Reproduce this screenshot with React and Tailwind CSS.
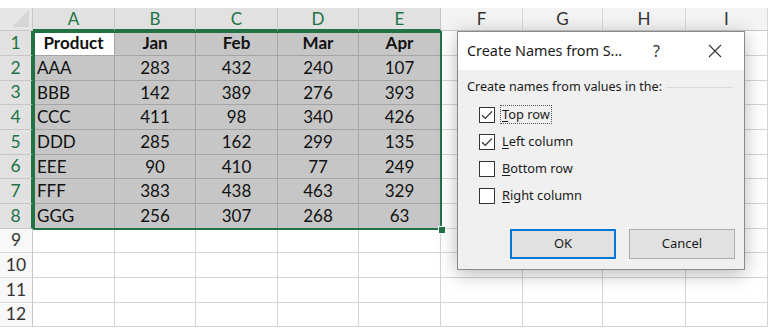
import React from 'react';

const cols = [
  { key: 'A', w: 'w-[82px]', sel: true },
  { key: 'B', w: 'w-[81px]', sel: true },
  { key: 'C', w: 'w-[82px]', sel: true },
  { key: 'D', w: 'w-[81px]', sel: true },
  { key: 'E', w: 'w-[82px]', sel: true },
  { key: 'F', w: 'w-[82px]', sel: false },
  { key: 'G', w: 'w-[80px]', sel: false },
  { key: 'H', w: 'w-[83px]', sel: false },
  { key: 'I', w: 'w-[82px]', sel: false },
];

const data = [
  ['Product', 'Jan', 'Feb', 'Mar', 'Apr'],
  ['AAA', '283', '432', '240', '107'],
  ['BBB', '142', '389', '276', '393'],
  ['CCC', '411', '98', '340', '426'],
  ['DDD', '285', '162', '299', '135'],
  ['EEE', '90', '410', '77', '249'],
  ['FFF', '383', '438', '463', '329'],
  ['GGG', '256', '307', '268', '63'],
];

const rowHeights = ['h-[25px]', 'h-[25px]', 'h-[24px]'];

const Cell = ({ col, row, c }) => {
  const value = data[row]?.[c];
  const inSel = col.sel && row < 8;
  const header = row === 0;
  const active = row === 0 && c === 0;
  let bg = 'bg-white';
  if (inSel && !active) bg = 'bg-[#c6c6c6]';
  const border = inSel ? 'border-[#a5a5a5]' : 'border-[#d4d4d4]';
  let align = 'justify-center';
  if (c === 0 && !header) align = 'justify-start pl-[4px]';
  return (
    <div className={`${col.w} h-full shrink-0 box-border border-r border-b ${border} ${bg} flex items-center ${align} ${header ? 'font-bold' : ''}`}>
      {value}
    </div>
  );
};

const Check = ({ checked, u, rest, focus }) => (
  <div className="flex items-center gap-[6px] h-[27px]">
    <div className="w-[16px] h-[16px] box-border border border-[#333] bg-white flex items-center justify-center">
      {checked && (
        <svg width="12" height="10" viewBox="0 0 12 10" fill="none">
          <path d="M1 5.2 L4.3 8.4 L11 1.4" stroke="#333" strokeWidth="1.3" />
        </svg>
      )}
    </div>
    <span className={`px-[1px] leading-[17px] ${focus ? 'outline outline-1 outline-dotted outline-[#555]' : ''}`}>
      <span className="underline underline-offset-[2px]">{u}</span>
      {rest}
    </span>
  </div>
);

export default function App() {
  return (
    <div className="relative w-[768px] h-[330px] overflow-hidden bg-white text-[#111] font-['Lato',sans-serif] text-[17px]">
      <div className="h-[8px]" />
      {/* column headers */}
      <div className="flex h-[23px]">
        <div className="relative w-[33px] shrink-0 box-border border-r border-b border-[#c8c8c8] bg-[#e6e6e6] overflow-hidden">
          <div className="absolute right-[3px] bottom-[3px] w-0 h-0 border-l-[17px] border-l-transparent border-b-[17px] border-b-[#d6d6d6]" />
        </div>
        {cols.map((col) => (
          <div
            key={col.key}
            className={`${col.w} shrink-0 box-border border-r flex items-center justify-center text-[17px] ${
              col.sel
                ? 'bg-[#e1e1e1] border-[#c6c6c6] text-[#217346] border-b-2 border-b-[#217346]'
                : 'bg-[#f3f3f3] border-[#d8d8d8] text-[#333] border-b border-b-[#c8c8c8]'
            }`}
          >
            {col.key}
          </div>
        ))}
      </div>
      {/* rows */}
      {Array.from({ length: 12 }).map((_, r) => (
        <div key={r} className={`flex ${rowHeights[r % 3]}`}>
          <div
            className={`w-[33px] shrink-0 box-border border-b flex items-center justify-center text-[17.5px] ${
              r < 8
                ? 'bg-[#e1e1e1] border-[#c6c6c6] text-[#217346] border-r-2 border-r-[#217346]'
                : 'bg-[#f8f8f8] border-[#dadada] text-[#333] border-r border-r-[#c8c8c8]'
            }`}
          >
            {r + 1}
          </div>
          {cols.map((col, c) => (
            <Cell key={col.key} col={col} row={r} c={c} />
          ))}
        </div>
      ))}

      {/* selection border */}
      <div className="absolute left-[33px] top-[31px] w-[409px] h-[199px] border-2 border-[#217346] pointer-events-none" />
      <div className="absolute left-[438px] top-[226px] w-[6px] h-[6px] bg-[#217346] border border-white box-content" />

      {/* dialog */}
      <div className="absolute left-[457px] top-[31px] w-[288px] h-[239px] border border-[#8a8a8a] bg-[#f0f0f0] shadow-[0_4px_18px_rgba(0,0,0,0.28)] font-['Noto_Sans',sans-serif] text-[#1a1a1a] flex flex-col">
        <div className="h-[38px] bg-white flex items-center pl-[9px] pr-[22px] text-[14.4px]">
          <span className="flex-1">Create Names from S...</span>
          <span className="mr-[48px] text-[16px] text-[#333]">?</span>
          <svg width="14" height="14" viewBox="0 0 14 14" fill="none">
            <path d="M1 1 L13 13 M13 1 L1 13" stroke="#333" strokeWidth="1.1" />
          </svg>
        </div>
        <div className="flex-1 flex flex-col px-[9px] pt-[8px] text-[12.6px]">
          <div className="flex items-center gap-[4px] h-[19px]">
            <span>Create names from values in the:</span>
            <div className="flex-1 h-px bg-[#dcdcdc] mr-[2px]" />
          </div>
          <div className="flex flex-col pl-[12px] pt-[4px] text-[12.8px]">
            <Check checked u="T" rest="op row" focus />
            <Check checked u="L" rest="eft column" />
            <Check u="B" rest="ottom row" />
            <Check u="R" rest="ight column" />
          </div>
          <div className="flex justify-end gap-[13px] mt-auto mb-[10px]">
            <button className="w-[106px] h-[30px] box-border border-2 border-[#0078d7] bg-[#e1e1e1] text-[13px]">OK</button>
            <button className="w-[106px] h-[30px] box-border border border-[#adadad] bg-[#e1e1e1] text-[13px]">Cancel</button>
          </div>
        </div>
      </div>
    </div>
  );
}
